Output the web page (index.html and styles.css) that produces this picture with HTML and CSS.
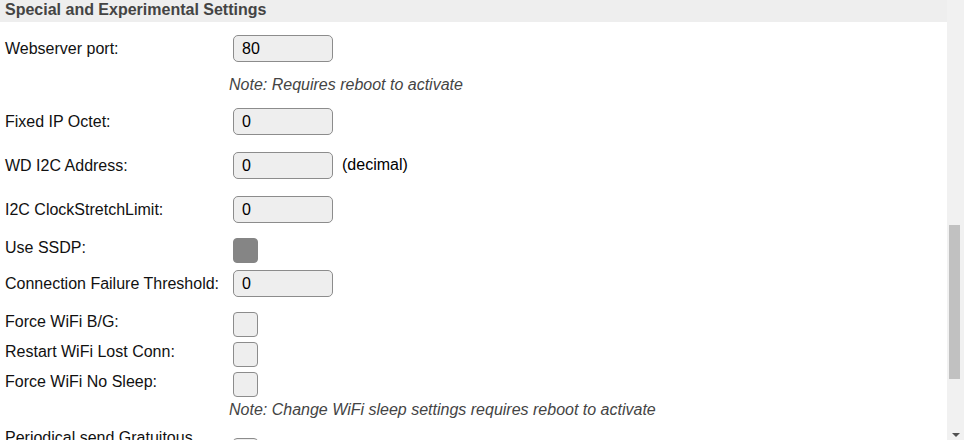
FILE: index.html
```html
<!DOCTYPE html>
<html>
<head>
	<meta charset="utf-8" />
	<title>Advanced Settings</title>
	<link rel="stylesheet" href="styles.css">
</head>
<body>
	<div class="page">
		<div class="content">
			<div class="section-head">Special and Experimental Settings</div>

			<div class="row">
				<div class="label">Webserver port:</div>
				<div class="field"><span class="input">80</span></div>
			</div>
			<div class="row note-row">
				<div class="label"></div>
				<div class="note">Note: Requires reboot to activate</div>
			</div>
			<div class="row">
				<div class="label">Fixed IP Octet:</div>
				<div class="field"><span class="input">0</span></div>
			</div>
			<div class="row">
				<div class="label">WD I2C Address:</div>
				<div class="field"><span class="input">0</span><span class="unit">(decimal)</span></div>
			</div>
			<div class="row">
				<div class="label">I2C ClockStretchLimit:</div>
				<div class="field"><span class="input">0</span></div>
			</div>
			<div class="row check-row">
				<div class="label">Use SSDP:</div>
				<div class="field"><span class="check checked"></span></div>
			</div>
			<div class="row">
				<div class="label">Connection Failure Threshold:</div>
				<div class="field"><span class="input">0</span></div>
			</div>
			<div class="row check-row">
				<div class="label">Force WiFi B/G:</div>
				<div class="field"><span class="check"></span></div>
			</div>
			<div class="row check-row">
				<div class="label">Restart WiFi Lost Conn:</div>
				<div class="field"><span class="check"></span></div>
			</div>
			<div class="row check-row">
				<div class="label">Force WiFi No Sleep:</div>
				<div class="field"><span class="check"></span></div>
			</div>
			<div class="row note-row">
				<div class="label"></div>
				<div class="note">Note: Change WiFi sleep settings requires reboot to activate</div>
			</div>
			<div class="row tall-row">
				<div class="label">Periodical send Gratuitous ARP:</div>
				<div class="field"><span class="check"></span></div>
			</div>
		</div>

		<div class="scrollbar">
			<div class="thumb"></div>
			<div class="arrow-down"></div>
		</div>
	</div>
</body>
</html>
```

FILE: styles.css
```css
html,
body {
	margin: 0;
	padding: 0;
	background: #fff;
	font-family: "Liberation Sans", Arial, sans-serif;
	font-size: 16px;
	color: #000;
}

.page {
	display: flex;
	height: 440px;
	overflow: hidden;
}

.content {
	flex: 1;
	min-width: 0;
}

.section-head {
	height: 22px;
	line-height: 20px;
	padding-left: 5px;
	background: #eee;
	color: #444;
	font-weight: bold;
	margin-bottom: 4px;
}

.row {
	display: grid;
	grid-template-columns: 228px 1fr;
	height: 44px;
	align-items: center;
}

.row .label {
	padding-left: 5px;
	padding-top: 2px;
	color: #111;
}

.check-row {
	height: 30px;
}

.note-row {
	height: 29px;
}

.tall-row {
	align-items: start;
	padding-top: 3px;
}

.field {
	display: flex;
	align-items: center;
	padding-left: 5px;
}

.input {
	box-sizing: border-box;
	width: 100px;
	height: 27px;
	line-height: 25px;
	padding-left: 8px;
	border: 1px solid #8c8c8c;
	border-radius: 5px;
	background: #eee;
}

.unit {
	margin-left: 9px;
}

.check-row .field {
	align-self: start;
	padding-top: 7px;
}

.tall-row .field {
	padding-top: 11px;
}

.check {
	box-sizing: border-box;
	width: 25px;
	height: 25px;
	border: 1px solid #8c8c8c;
	border-radius: 4px;
	background: #eee;
}

.check.checked {
	background: #858585;
	border-color: #858585;
}

.note {
	padding-left: 1px;
	font-style: italic;
	color: #444;
}

/* fake browser scrollbar, page is scrolled down */
.scrollbar {
	width: 17px;
	background: #f1f1f1;
	display: flex;
	flex-direction: column;
	align-items: flex-start;
}

.thumb {
	width: 11px;
	height: 154px;
	margin: 225px 0 0 2px;
	background: #c1c1c1;
}

.arrow-down {
	width: 0;
	height: 0;
	margin: 54px 0 0 5px;
	border-left: 4px solid transparent;
	border-right: 4px solid transparent;
	border-top: 4px solid #505050;
}
```
